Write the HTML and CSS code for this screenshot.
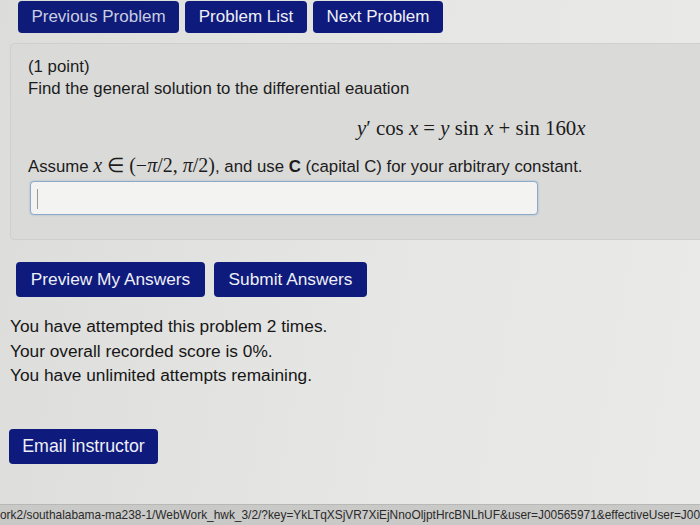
FILE: index.html
```html
<!DOCTYPE html>
<html>
<head>
<meta charset="utf-8">
<link rel="stylesheet" href="styles.css">
</head>
<body>
<div class="page">
  <nav class="nav">
    <a class="btn nav-btn prev">Previous Problem</a>
    <a class="btn nav-btn list">Problem List</a>
    <a class="btn nav-btn next">Next Problem</a>
  </nav>
  <section class="problem">
    <p class="line">(1 point)</p>
    <p class="line">Find the general solution to the differential eauation</p>
    <div class="equation"><span class="math"><i>y</i>&#8242; cos <i>x</i> = <i>y</i> sin <i>x</i> + sin 160<i>x</i></span></div>
    <p class="line assume">Assume <span class="math"><i>x</i> &#8712; (&#8722;<i>&#960;</i>/2, <i>&#960;</i>/2)</span>, and use <b>C</b> (capital C) for your arbitrary constant.</p>
    <div class="answer"><span class="caret"></span></div>
  </section>
  <div class="actions">
    <a class="btn act preview">Preview My Answers</a>
    <a class="btn act submit">Submit Answers</a>
  </div>
  <div class="status-msg">
    <p>You have attempted this problem 2 times.</p>
    <p>Your overall recorded score is 0%.</p>
    <p>You have unlimited attempts remaining.</p>
  </div>
  <div class="email-row">
    <a class="btn act email">Email instructor</a>
  </div>
  <div class="urlbar">ork2/southalabama-ma238-1/WebWork_hwk_3/2/?key=YkLTqXSjVR7XiEjNnoOljptHrcBNLhUF&amp;user=J00565971&amp;effectiveUser=J00</div>
</div>
</body>
</html>
```
FILE: styles.css
```css
html, body {
  margin: 0;
  padding: 0;
  height: 525px;
  overflow: hidden;
}
body {
  font-family: "Liberation Sans", Arial, sans-serif;
  color: #1c1c1c;
  background: linear-gradient(100deg, #dcdcda 0%, #e6e6e4 55%, #eaeae8 100%);
}
.page {
  position: relative;
  width: 700px;
  height: 525px;
}
.btn {
  display: inline-flex;
  align-items: center;
  justify-content: center;
  box-sizing: border-box;
  background: #0e1a7c;
  color: #eef0f6;
  border-radius: 4px;
  font-size: 17px;
  text-decoration: none;
  white-space: nowrap;
}
.nav {
  display: flex;
  gap: 6px;
  padding-left: 18px;
  padding-top: 1px;
}
.nav-btn {
  height: 32px;
}
.prev { width: 161px; background: #0f1b78; color: #c9cde0; }
.list { width: 122px; }
.next { width: 130px; }
.problem {
  margin: 10px -10px 0 10px;
  height: 197px;
  box-sizing: border-box;
  background: #dadad9;
  border: 1px solid #cfcfcd;
  border-radius: 4px;
  padding: 12px 17px 0 17px;
}
.line {
  margin: 0;
  font-size: 16.8px;
  line-height: 22px;
  white-space: nowrap;
}
.equation {
  padding-left: 329px;
  margin-top: 17px;
  height: 22px;
  line-height: 22px;
}
.math {
  font-family: "Liberation Serif", "Times New Roman", serif;
  font-size: 20.8px;
}
.assume {
  margin-top: 15px;
}
.assume .math {
  font-size: 20px;
}
.answer {
  margin-top: 3px;
  margin-left: 2px;
  width: 508px;
  height: 34px;
  box-sizing: border-box;
  background: #f3f3f2;
  border: 1px solid #8ea9c8;
  border-radius: 4px;
  box-shadow: 0 0 2px rgba(100, 140, 190, 0.5);
  padding: 7px 0 0 6px;
}
.caret {
  display: block;
  width: 1px;
  height: 20px;
  background: #9a9a9a;
}
.actions {
  display: flex;
  gap: 9px;
  padding-left: 16px;
  margin-top: 22px;
}
.act {
  height: 35px;
  font-size: 17.3px;
}
.preview { width: 189px; }
.submit { width: 153px; }
.email { width: 149px; font-size: 17.8px; }
.status-msg {
  margin-top: 17px;
  padding-left: 10px;
  font-size: 17.3px;
  line-height: 24.5px;
  color: #161616;
}
.status-msg p {
  margin: 0;
  white-space: nowrap;
}
.email-row {
  margin-top: 41px;
  padding-left: 9px;
}
.urlbar {
  position: absolute;
  left: 0;
  right: 0;
  bottom: 0;
  height: 20px;
  line-height: 20px;
  background: #c9c9c7;
  border-top: 1px solid #b8b8b6;
  font-size: 11.9px;
  color: #2a2a2a;
  white-space: nowrap;
  overflow: hidden;
}
```
